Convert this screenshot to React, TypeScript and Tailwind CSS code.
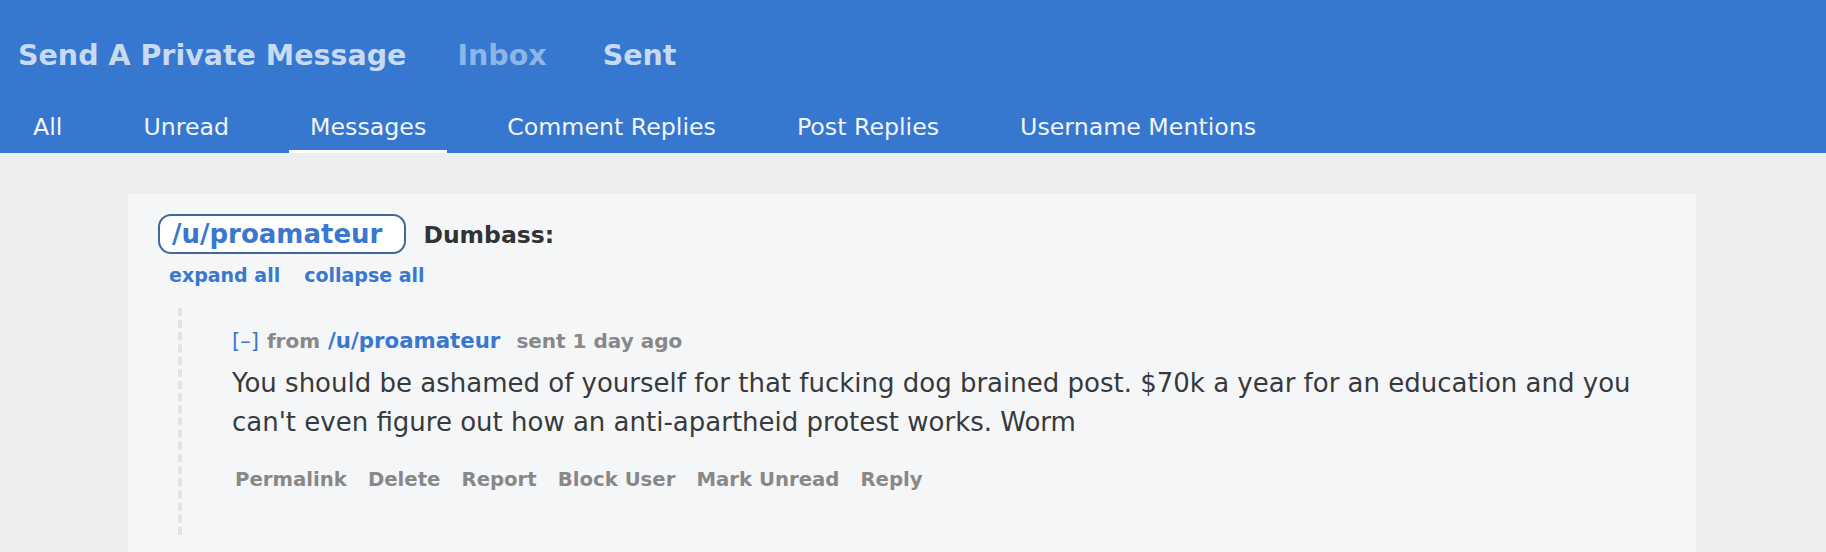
import React from "react";

const font = { fontFamily: "'DejaVu Sans', Verdana, sans-serif" };

const tabs = ["All", "Unread", "Messages", "Comment Replies", "Post Replies", "Username Mentions"];
const actions = ["Permalink", "Delete", "Report", "Block User", "Mark Unread", "Reply"];

const Header = () => {
  return (
    <div className="bg-[#3677cf] h-[153px] flex flex-col">
      <div className="flex pl-[18px] pt-[36px] text-[28.5px] leading-[40px] font-bold">
        <span className="text-[#c8daf1]">Send A Private Message</span>
        <span className="ml-[51px] text-[#8db6e7]">Inbox</span>
        <span className="ml-[56px] text-[#c8daf1]">Sent</span>
      </div>
      <div className="flex gap-[39px] pl-[12px] mt-[33px]">
        {tabs.map((t) => (
          <div
            key={t}
            className={
              "px-[21px] pb-[5px] text-[23.7px] leading-[36px] text-[#f1f4f9] border-b-[3px] " +
              (t === "Messages" ? "border-white" : "border-transparent")
            }
          >
            {t}
          </div>
        ))}
      </div>
    </div>
  );
};

const Message = () => {
  return (
    <div className="ml-[20px] mt-[19px] border-l-4 border-dashed border-[#e2e3e5] pl-[50px] pt-[18px] pb-[40px]">
      <div className="flex items-baseline text-[20px] leading-[30px]">
        <span className="text-[#3a77cf] text-[21px]">[–]</span>
        <span className="ml-[8px] font-bold text-[#888888]">from</span>
        <span className="ml-[8px] font-bold text-[#3a77cf] text-[21.3px]">/u/proamateur</span>
        <span className="ml-[16px] font-bold text-[#888888]">sent 1 day ago</span>
      </div>
      <p className="mt-[8px] text-[26px] leading-[39px] text-[#373a3c] max-w-[1440px]">
        You should be ashamed of yourself for that fucking dog brained post. $70k a year for an education and
        you can't even figure out how an anti-apartheid protest works. Worm
      </p>
      <div className="mt-[23px] pl-[3px] flex gap-[21px] text-[19.7px] leading-[30px] font-bold text-[#888888]">
        {actions.map((a) => (
          <span key={a}>{a}</span>
        ))}
      </div>
    </div>
  );
};

export default function App() {
  return (
    <div className="h-[552px] bg-[#edeef0] overflow-hidden" style={font}>
      <Header />
      <div className="ml-[128px] mt-[41px] w-[1568px] bg-[#f5f6f8] pl-[30px] pt-[20px] pb-[60px]">
        <div className="flex items-baseline">
          <span className="inline-block bg-white border-2 border-[#41689b] rounded-[13px] pl-[12px] pr-[22px] text-[26px] leading-[36px] font-bold text-[#3a77cf]">
            /u/proamateur
          </span>
          <span className="ml-[17px] text-[23.5px] font-bold text-[#333333]">Dumbass:</span>
        </div>
        <div className="mt-[7px] pl-[11px] flex gap-[24px] text-[19px] leading-[28px] font-bold text-[#3a77cf]">
          <span>expand all</span>
          <span>collapse all</span>
        </div>
        <Message />
      </div>
    </div>
  );
}
